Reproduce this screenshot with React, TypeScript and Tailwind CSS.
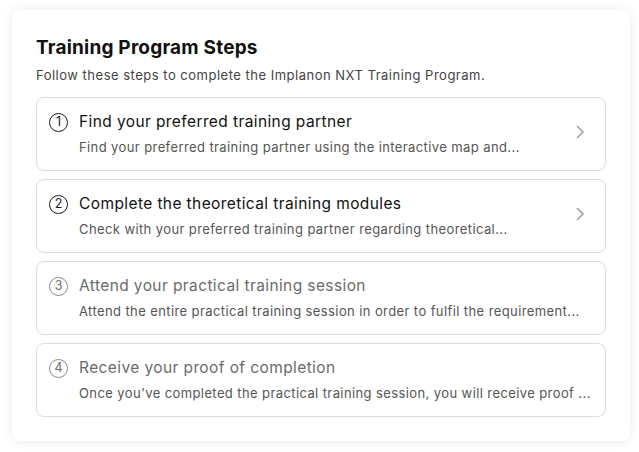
import React from 'react'

type Step = { n: number; title: string; desc: string; active: boolean }

const steps: Step[] = [
  { n: 1, title: 'Find your preferred training partner', desc: 'Find your preferred training partner using the interactive map and...', active: true },
  { n: 2, title: 'Complete the theoretical training modules', desc: 'Check with your preferred training partner regarding theoretical...', active: true },
  { n: 3, title: 'Attend your practical training session', desc: 'Attend the entire practical training session in order to fulfil the requirement...', active: false },
  { n: 4, title: 'Receive your proof of completion', desc: 'Once you\u2019ve completed the practical training session, you will receive proof ...', active: false },
]

function StepRow({ s }: { s: Step }) {
  return (
    <div className="relative h-[74px] rounded-lg border border-[#dcdcdc] bg-white pl-[12px] pr-[18px] pt-[14px]">
      <div className="flex items-center gap-[11px] h-[20px]">
        <span
          className={
            'flex items-center justify-center w-[19px] h-[19px] rounded-full border-[1.5px] text-[12.5px] leading-none ' +
            (s.active ? 'border-[#1a1a1a] text-[#1a1a1a]' : 'border-[#8a8a8a] text-[#6e6e6e]')
          }
        >
          {s.n}
        </span>
        <span className={'text-[15.5px] leading-[20px] tracking-[0.4px] ' + (s.active ? 'text-[#111]' : 'text-[#6b6b6b]')}>{s.title}</span>
      </div>
      <div className="pl-[30px] mt-[7px] text-[13px] leading-[16px] tracking-[0.4px] text-[#555] whitespace-nowrap">{s.desc}</div>
      {s.active && (
        <svg width="14" height="18" viewBox="0 0 14 18" className="absolute right-[18px] top-[25px]">
          <path d="M4 3 L10 9 L4 15" fill="none" stroke="#a0a0a0" strokeWidth="1.6" />
        </svg>
      )}
    </div>
  )
}

export default function App() {
  return (
    <div className="w-[639px] h-[452px] bg-white pt-[10px] px-[12px] font-['Inter',sans-serif]">
      <div className="w-[618px] h-[431px] rounded-lg bg-white shadow-[0_0_12px_rgba(0,0,0,0.09)] px-[24px] pt-[26px]">
        <h1 className="text-[19px] font-bold tracking-[0.2px] text-[#111] leading-[24px]">Training Program Steps</h1>
        <p className="mt-[7px] text-[13px] tracking-[0.5px] text-[#444] leading-[16px]">Follow these steps to complete the Implanon NXT Training Program.</p>
        <div className="mt-[14px] flex flex-col gap-[8px] w-[570px]">
          {steps.map(s => <StepRow key={s.n} s={s} />)}
        </div>
      </div>
    </div>
  )
}
